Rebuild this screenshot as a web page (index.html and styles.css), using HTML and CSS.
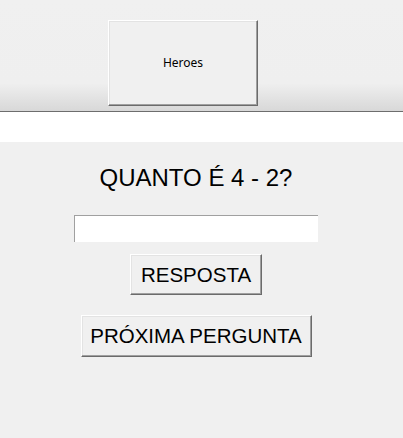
FILE: index.html
```html
<!DOCTYPE html>
<html lang="pt">
<head>
<meta charset="utf-8">
<title>Quiz</title>
<link rel="stylesheet" href="styles.css">
</head>
<body>
<header class="toolbar">
  <button class="win-btn heroes">Heroes</button>
</header>
<div class="band"></div>
<main class="quiz">
  <h1 class="question">QUANTO É 4 - 2?</h1>
  <input class="answer" type="text">
  <button class="win-btn big resposta">RESPOSTA</button>
  <button class="win-btn big proxima">PRÓXIMA PERGUNTA</button>
</main>
</body>
</html>
```
FILE: styles.css
```css
html, body {
  margin: 0;
  padding: 0;
  background: #f0f0f0;
  height: 100%;
}
body {
  font-family: "Liberation Sans", Arial, sans-serif;
  overflow: hidden;
}
.toolbar {
  height: 112px;
  box-sizing: border-box;
  padding: 20px 0 0 108px;
  background: linear-gradient(#f0f0f0 0%, #efefef 75%, #d8d8d8 100%);
  border-bottom: 1px solid #6d6d6d;
  display: flex;
  align-items: flex-start;
}
.win-btn {
  box-sizing: border-box;
  margin: 0;
  background: #f0f0f0;
  color: #000;
  border-top: 1px solid #ffffff;
  border-left: 1px solid #ffffff;
  border-right: 1px solid #6b6b6b;
  border-bottom: 1px solid #6b6b6b;
  box-shadow: inset -1px -1px 0 #a0a0a0, inset 1px 1px 0 #e3e3e3;
  padding: 0;
  display: flex;
  align-items: center;
  justify-content: center;
}
.heroes {
  width: 150px;
  height: 86px;
  font-family: "Noto Sans", "DejaVu Sans", sans-serif;
  font-size: 12px;
  padding-bottom: 2px;
}
.band {
  height: 30px;
  background: #ffffff;
}
.quiz {
  display: flex;
  flex-direction: column;
  align-items: center;
  padding: 22px 11px 0 0;
}
.question {
  margin: 0;
  font-weight: normal;
  font-size: 24px;
  line-height: 28px;
  height: 28px;
}
.answer {
  margin-top: 23px;
  width: 244px;
  height: 27px;
  box-sizing: border-box;
  border: none;
  border-top: 1px solid #a0a0a0;
  border-left: 1px solid #a0a0a0;
  background: #fff;
  outline: none;
  padding: 0 2px;
}
.big {
  font-family: "Liberation Sans", Arial, sans-serif;
  font-size: 20.5px;
}
.resposta {
  margin-top: 12px;
  width: 132px;
  height: 41px;
}
.proxima {
  margin-top: 20px;
  width: 231px;
  height: 42px;
}
```
